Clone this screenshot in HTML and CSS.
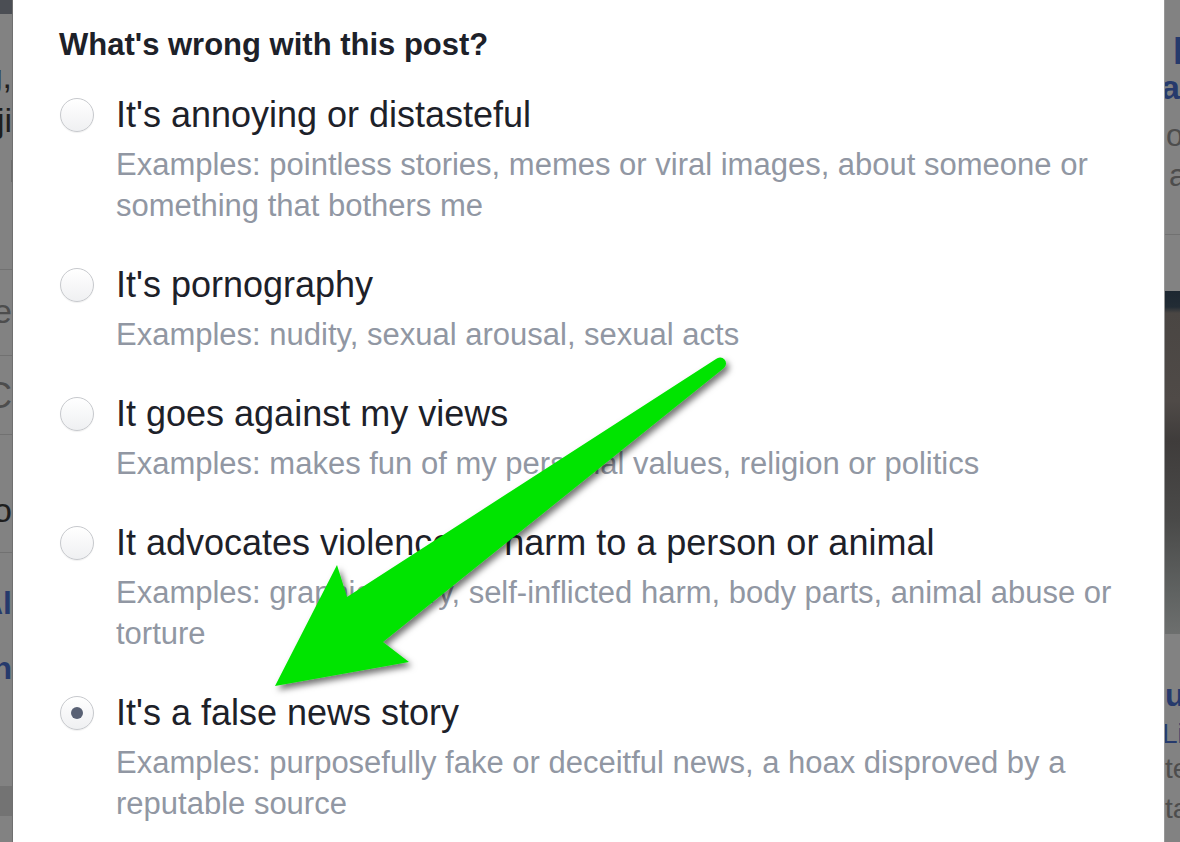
FILE: index.html
```html
<!DOCTYPE html>
<html lang="en">
<head>
    <meta charset="UTF-8">
    <meta name="viewport" content="width=device-width, initial-scale=1.0">
    <title>Report post</title>
    <link rel="stylesheet" href="styles.css">
</head>
<body>
    <div class="backdrop-left">
        <div class="bar-top"></div>
        <div class="frag frag-dark l-1">ring,</div>
        <div class="frag frag-dark l-2">iji</div>
        <div class="tick"></div>
        <div class="rule l-rule-1"></div>
        <div class="frag frag-gray l-3">ee</div>
        <div class="rule l-rule-2"></div>
        <div class="frag frag-gray l-4">CC</div>
        <div class="rule l-rule-3"></div>
        <div class="frag frag-dark l-5">Do</div>
        <div class="rule l-rule-4"></div>
        <div class="frag frag-blue l-6">Al</div>
        <div class="frag frag-blue l-7">Th</div>
        <div class="band"></div>
    </div>

    <div class="dialog">
        <h1 class="dialog-title">What's wrong with this post?</h1>
        <div class="options">
            <label class="option">
                <span class="radio"></span>
                <span class="option-text">
                    <span class="option-label">It's annoying or distasteful</span>
                    <span class="option-desc">Examples: pointless stories, memes or viral images, about someone or something that bothers me</span>
                </span>
            </label>
            <label class="option">
                <span class="radio"></span>
                <span class="option-text">
                    <span class="option-label">It's pornography</span>
                    <span class="option-desc">Examples: nudity, sexual arousal, sexual acts</span>
                </span>
            </label>
            <label class="option">
                <span class="radio"></span>
                <span class="option-text">
                    <span class="option-label">It goes against my views</span>
                    <span class="option-desc">Examples: makes fun of my personal values, religion or politics</span>
                </span>
            </label>
            <label class="option">
                <span class="radio"></span>
                <span class="option-text">
                    <span class="option-label">It advocates violence or harm to a person or animal</span>
                    <span class="option-desc">Examples: graphic injury, self-inflicted harm, body parts, animal abuse or torture</span>
                </span>
            </label>
            <label class="option">
                <span class="radio checked"></span>
                <span class="option-text">
                    <span class="option-label">It's a false news story</span>
                    <span class="option-desc">Examples: purposefully fake or deceitful news, a hoax disproved by a reputable source</span>
                </span>
            </label>
        </div>
    </div>

    <div class="backdrop-right">
        <div class="frag frag-blue r-1">l</div>
        <div class="frag frag-blue r-2">ak</div>
        <div class="frag frag-gray r-3">o</div>
        <div class="frag frag-gray r-4">a</div>
        <div class="rule r-rule"></div>
        <div class="photo"></div>
        <div class="frag frag-blue r-5">u</div>
        <div class="frag frag-blue r-6">Li</div>
        <div class="frag frag-gray r-7">te</div>
        <div class="frag frag-gray r-8">ta</div>
    </div>

    <svg class="arrow" width="1180" height="842" viewBox="0 0 1180 842">
        <defs>
            <filter id="shadow" x="-20%" y="-20%" width="140%" height="140%">
                <feDropShadow dx="3" dy="4" stdDeviation="3" flood-color="#000" flood-opacity="0.55"/>
            </filter>
        </defs>
        <path d="M275 686 L337 565 L347 597 L716 359 A6 6 0 0 1 724 368 L383 642 L409 662 Z" fill="#00e400" filter="url(#shadow)"/>
    </svg>
</body>
</html>
```

FILE: styles.css
```css
* {
    margin: 0;
    padding: 0;
    box-sizing: border-box;
}

html {
    background-color: #828282;
}

body {
    font-family: "Liberation Sans", Arial, sans-serif;
    background-color: #828282;
    height: 842px;
    overflow: hidden;
    display: flex;
}

/* dimmed page behind the dialog */
.backdrop-left {
    width: 13px;
    flex: none;
    background-color: #828282;
    border-right: 1px solid #6f6f6f;
    overflow: hidden;
    display: flex;
    flex-direction: column;
}

.backdrop-right {
    width: 16px;
    flex: none;
    background-color: #828282;
    border-left: 1px solid #979797;
    overflow: hidden;
    display: flex;
    flex-direction: column;
}

.bar-top {
    height: 14px;
    background-color: #4b4e54;
    flex: none;
}

.frag {
    display: flex;
    white-space: nowrap;
    flex: none;
    font-size: 34px;
    line-height: 34px;
}

.backdrop-left .frag {
    justify-content: flex-end;
}

.frag-dark {
    color: #1e1e1e;
}

.frag-gray {
    color: #4d4d4d;
}

.frag-blue {
    color: #263a6c;
    font-weight: bold;
}

.rule {
    height: 1px;
    flex: none;
    background-color: #717171;
}

.tick {
    height: 22px;
    margin-top: 23px;
    border-right: 1px solid #6c6c6c;
    flex: none;
}

.band {
    height: 30px;
    margin-top: 102px;
    background-color: #737373;
    flex: none;
}

.l-1 { margin-top: 45px; }
.l-2 { margin-top: 10px; }
.l-rule-1 { margin-top: 87px; }
.l-3 { margin-top: 24px; }
.l-rule-2 { margin-top: 27px; }
.l-4 { margin-top: 22px; font-size: 36px; line-height: 36px; }
.l-rule-3 { margin-top: 20px; }
.l-5 { margin-top: 58px; }
.l-rule-4 { margin-top: 25px; }
.l-6 { margin-top: 34px; font-size: 32px; line-height: 32px; }
.l-7 { margin-top: 33px; font-size: 32px; line-height: 32px; }

.r-1 { margin-top: 34px; padding-left: 8px; font-size: 36px; line-height: 36px; }
.r-2 { margin-top: 0; margin-left: -4px; font-size: 34px; line-height: 34px; }
.r-3 { margin-top: 16px; padding-left: 1px; font-size: 31px; line-height: 31px; }
.r-4 { margin-top: 9px; padding-left: 4px; font-size: 31px; line-height: 31px; }
.r-rule { margin-top: 43px; }
.r-5 { margin-top: 45px; font-size: 32px; line-height: 32px; }
.r-6 { margin-top: 9px; margin-left: -3px; font-size: 28px; line-height: 28px; font-weight: normal; }
.r-7 { margin-top: 7px; font-size: 28px; line-height: 28px; }
.r-8 { margin-top: 12px; font-size: 28px; line-height: 28px; }

.photo {
    height: 343px;
    margin-top: 56px;
    flex: none;
    background: linear-gradient(to bottom, #1d2731 0, #222c35 16px, #4a4643 22px, #4f4a47 110px, #3f3c3b 150px, #4a4a49 230px, #5f6261 300px, #6d6f6e 343px);
}

/* dialog */
.dialog {
    flex: 1;
    background-color: #fff;
    padding: 27px 18px 0 47px;
    color: #1d2129;
}

.dialog-title {
    font-size: 31px;
    line-height: 36px;
    font-weight: bold;
    margin: 0 0 29px -1px;
    color: #1d2129;
}

.option {
    display: flex;
    gap: 22px;
    margin-bottom: 36px;
}

.radio {
    flex: none;
    width: 34px;
    height: 34px;
    margin-top: 6px;
    border-radius: 50%;
    border: 1px solid #c7c9cd;
    background: linear-gradient(#ffffff, #eff0f2);
    box-shadow: 0 1px 1px rgba(0, 0, 0, 0.06);
    display: flex;
    justify-content: center;
    align-items: center;
}

.radio.checked::after {
    content: "";
    width: 12px;
    height: 12px;
    border-radius: 50%;
    background-color: #596174;
}

.option-text {
    display: block;
}

.option-label {
    display: block;
    font-size: 36px;
    line-height: 46px;
    color: #1d2129;
}

.option-desc {
    display: block;
    margin-top: 6px;
    font-size: 31px;
    line-height: 41px;
    color: #9197a3;
}

.arrow {
    position: absolute;
    left: 0;
    top: 0;
    pointer-events: none;
}
```
